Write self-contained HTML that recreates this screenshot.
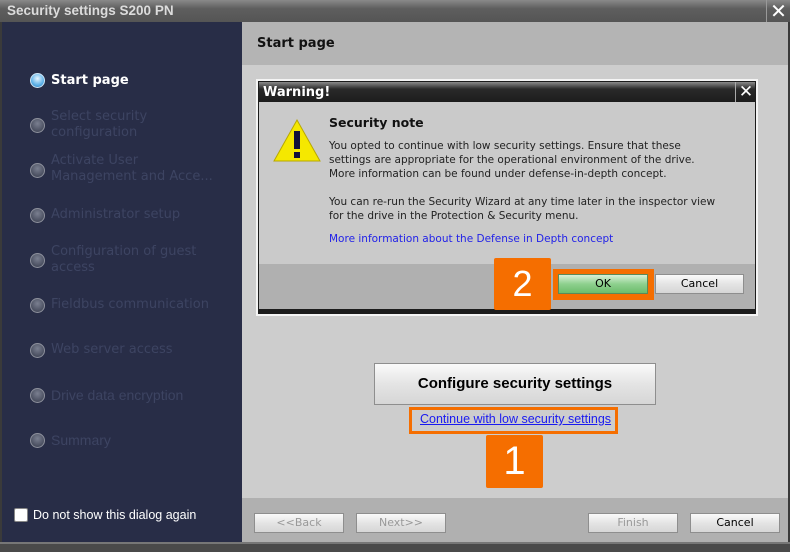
<!DOCTYPE html>
<html><head><meta charset="utf-8"><style>
*{margin:0;padding:0;box-sizing:border-box}
body{width:790px;height:552px;background:#3a3a3a;font-family:"DejaVu Sans","Liberation Sans",sans-serif;position:relative;overflow:hidden}
.a{position:absolute}
.title{left:0;top:0;width:790px;height:22px;background:linear-gradient(#8a8a8a,#5e5e5e 40%,#555);color:#dcdcdc;font-weight:bold;font-family:"Liberation Sans",sans-serif;font-size:13.5px;line-height:22px;padding-left:7px}
.side{left:2px;top:22px;width:240px;height:520px;background:#282d47}
.item{position:absolute;left:49px;font-size:13px;color:#3d4462;line-height:16px}
.dot{position:absolute;left:28px;width:15px;height:15px;border-radius:50%;background:radial-gradient(circle at 50% 35%,#7a7f90,#4a4f60 70%);border:1px solid #8d909c}
.right{left:242px;top:22px;width:546px;height:520px;background:#cdcdcd}
.btn{position:absolute;border:1px solid #8e8e8e;background:linear-gradient(#fafafa,#e4e4e4 50%,#d6d6d6);font-size:12px;text-align:center;color:#000}
.orange{position:absolute;background:#f56e00;color:#fff;font-family:"Liberation Sans",sans-serif;text-align:center;border-radius:2px}
</style></head><body>
<div class="a title">Security settings S200 PN</div>
<div class="a" style="left:766px;top:0;width:24px;height:22px;border-left:1px solid #999;color:#fff;font-size:20px;line-height:22px;text-align:center">✕</div>
<div class="a side">
 <div class="dot" style="top:51px;background:radial-gradient(circle at 50% 35%,#e8f6ff,#5fb2e8 60%,#2a78b8);border-color:#cfe6f7"></div>
 <div class="item" style="top:51px;color:#fff;font-weight:bold">Start page</div>
 <div class="dot" style="top:96px"></div><div class="item" style="top:87px">Select security<br>configuration</div>
 <div class="dot" style="top:141px"></div><div class="item" style="top:131px">Activate User<br>Management and Acce...</div>
 <div class="dot" style="top:186px"></div><div class="item" style="top:185px">Administrator setup</div>
 <div class="dot" style="top:231px"></div><div class="item" style="top:222px">Configuration of guest<br>access</div>
 <div class="dot" style="top:276px"></div><div class="item" style="top:275px">Fieldbus communication</div>
 <div class="dot" style="top:321px"></div><div class="item" style="top:320px">Web server access</div>
 <div class="dot" style="top:366px"></div><div class="item" style="top:365px;font-family:'Liberation Sans';font-size:14px">Drive data encryption</div>
 <div class="dot" style="top:411px"></div><div class="item" style="top:410px;font-family:'Liberation Sans';font-size:14px">Summary</div>
 <div class="a" style="left:12px;top:486px;width:14px;height:14px;background:#fff;border:1px solid #888;border-radius:2px"></div>
 <div class="a" style="left:31px;top:486px;color:#fff;font-family:'Liberation Sans';font-size:12.5px">Do not show this dialog again</div>
</div>
<div class="a right">
 <div class="a" style="left:0;top:0;width:546px;height:43px;background:#b4b4b4;font-weight:bold;font-size:13px;line-height:44px;padding-left:15px;color:#111">Start page</div>
 <div class="a" style="left:0;top:476px;width:546px;height:44px;background:#b0b0b0"></div>
</div>
<div class="a" style="left:0;top:542px;width:790px;height:10px;background:#4a4a4a;border-top:2px solid #777"></div>
<div class="btn" style="left:374px;top:363px;width:282px;height:42px;line-height:40px;font-family:'Liberation Sans';font-size:15px;font-weight:bold">Configure security settings</div>
<div class="a" style="left:409px;top:407px;width:209px;height:27px;border:3px solid #f56e00"></div>
<div class="a" style="left:420px;top:412px;color:#1a1af0;font-family:'Liberation Sans';font-size:12.5px;text-decoration:underline">Continue with low security settings</div>
<div class="orange" style="left:486px;top:435px;width:57px;height:53px;font-size:40px;line-height:53px">1</div>
<div class="btn" style="left:254px;top:513px;width:90px;height:20px;line-height:18px;color:#999;font-size:11px">&lt;&lt;Back</div>
<div class="btn" style="left:356px;top:513px;width:90px;height:20px;line-height:18px;color:#999;font-size:11px">Next&gt;&gt;</div>
<div class="btn" style="left:588px;top:513px;width:90px;height:20px;line-height:18px;color:#999;font-size:11px">Finish</div>
<div class="btn" style="left:690px;top:513px;width:90px;height:20px;line-height:18px;font-size:11px">Cancel</div>
<div class="a" style="left:256px;top:79px;width:502px;height:237px;border:2px solid #f4f4f4;background:#1c1c1c">
 <div class="a" style="left:1px;top:1px;width:496px;height:20px;background:linear-gradient(#8a8a8a,#2a2a2a 35%,#1c1c1c);color:#fff;font-weight:bold;font-size:13px;line-height:21px;padding-left:4px">Warning!</div>
 <div class="a" style="left:477px;top:1px;width:21px;height:20px;border-left:1px solid #aaa;color:#fff;font-size:17px;line-height:20px;text-align:center">✕</div>
 <div class="a" style="left:1px;top:21px;width:496px;height:162px;background:#cacaca"></div>
 <div class="a" style="left:1px;top:183px;width:496px;height:45px;background:#b0b0b0"></div>
 <svg class="a" style="left:15px;top:37px" width="50" height="45"><polygon points="24,2 47,43 1,43" fill="#f5e800" stroke="#b8a800"/><rect x="21" y="13" width="6" height="18" fill="#12123a"/><rect x="21" y="34" width="6" height="6" fill="#12123a"/></svg>
 <div class="a" style="left:71px;top:34px;font-weight:bold;font-size:12.5px;color:#111">Security note</div>
 <div class="a" style="left:71px;top:58px;font-size:10.5px;line-height:14px;color:#222;white-space:nowrap">You opted to continue with low security settings. Ensure that these<br>settings are appropriate for the operational environment of the drive.<br>More information can be found under defense-in-depth concept.<br><br>You can re-run the Security Wizard at any time later in the inspector view<br>for the drive in the Protection &amp; Security menu.</div>
 <div class="a" style="left:71px;top:152px;font-size:10.5px;color:#2222e8">More information about the Defense in Depth concept</div>
 <div class="a" style="left:295px;top:188px;width:101px;height:31px;background:#f56e00"></div>
 <div class="btn" style="left:300px;top:193px;width:90px;height:20px;line-height:18px;background:linear-gradient(#d8f0d8,#8ed08e 50%,#6cbc6c);border-color:#5a8a5a;font-size:11px">OK</div>
 <div class="btn" style="left:397px;top:193px;width:89px;height:20px;line-height:18px;font-size:11px">Cancel</div>
</div>
<div class="orange" style="left:494px;top:258px;width:57px;height:52px;font-size:36px;line-height:52px">2</div>
</body></html>
